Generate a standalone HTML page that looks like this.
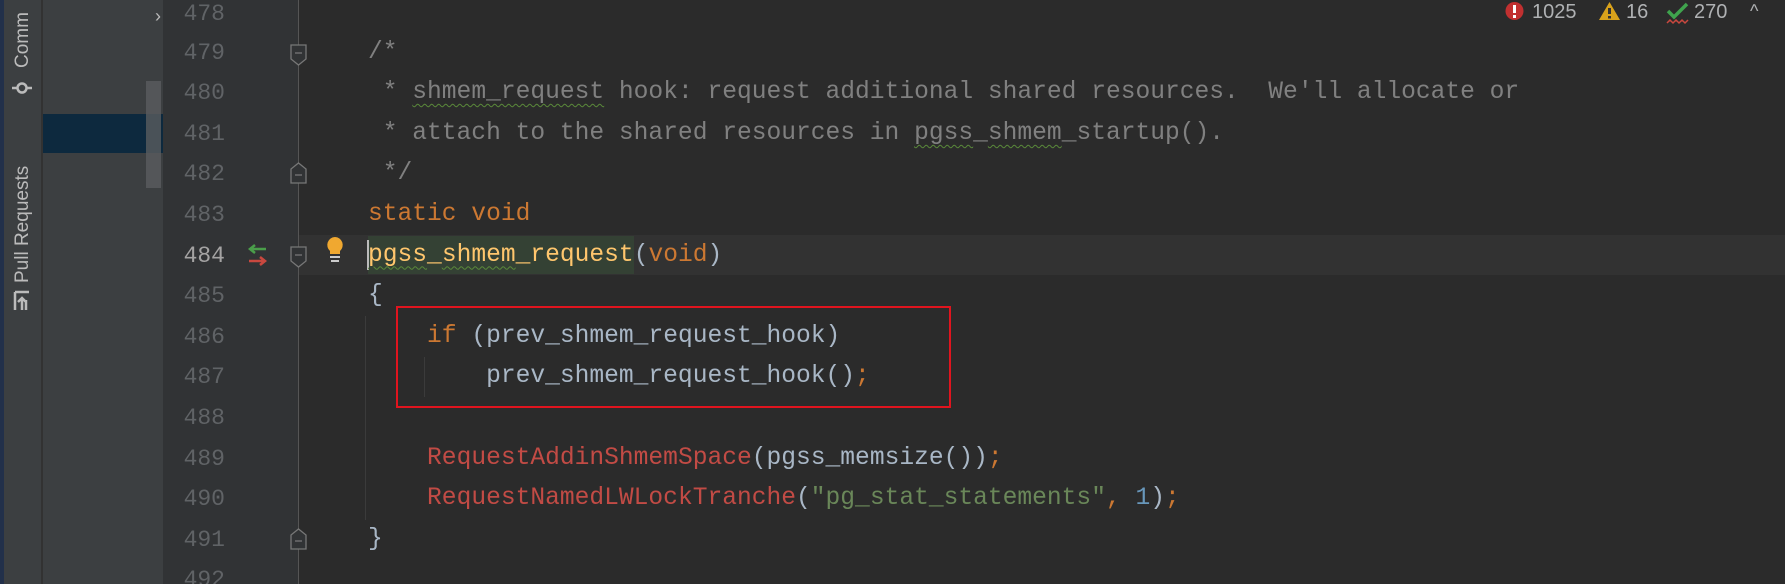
<!DOCTYPE html>
<html><head><style>
html,body{margin:0;width:1785px;height:584px;overflow:hidden}
body{background:#2b2b2b;position:relative;font-family:"Liberation Mono",monospace}
.a{position:absolute}
.ln{position:absolute;right:1560px;width:60px;text-align:right;color:#606366;font-size:23px;line-height:40.6px;height:40.6px}
.c{position:absolute;left:368px;white-space:pre;font-size:24.6px;line-height:40.6px;height:40.6px;color:#a9b7c6}
.cm{color:#808080}.kw{color:#cc7832}.fn{color:#ffc66d}.rf{color:#c24b45}.st{color:#6a8759}.nu{color:#6897bb}
.wv{text-decoration:underline wavy #5a8a3a;text-decoration-thickness:1px;text-underline-offset:5px}
.vt{position:absolute;transform:rotate(-90deg);transform-origin:left top;font-family:"Liberation Sans",sans-serif;color:#bbbbbb;font-size:19px;white-space:nowrap}
</style></head><body>
<div class="a" style="left:0;top:0;width:4px;height:584px;background:#22304a"></div>
<div class="a" style="left:4px;top:0;width:37px;height:584px;background:#3c3f41"></div>
<div class="a" style="left:41px;top:0;width:2px;height:584px;background:#323232"></div>
<div class="vt" style="left:12px;top:68px">Comm</div>
<svg class="a" style="left:12px;top:78px" width="20" height="20"><circle cx="10" cy="10" r="4.5" fill="none" stroke="#bbb" stroke-width="2.5"/><line x1="0" y1="10" x2="5" y2="10" stroke="#bbb" stroke-width="2.5"/><line x1="15" y1="10" x2="20" y2="10" stroke="#bbb" stroke-width="2.5"/></svg>
<div class="vt" style="left:12px;top:283px">Pull Requests</div>
<svg class="a" style="left:13px;top:290px" width="18" height="22"><path d="M2 2h14M2 2v18M9 20V8M5 12l4-4 4 4M13 10v10" fill="none" stroke="#bbb" stroke-width="2.5"/></svg>
<div class="a" style="left:43px;top:0;width:120px;height:584px;background:#3c3f41"></div>
<div class="a" style="left:43px;top:114px;width:120px;height:39px;background:#0d293e"></div>
<div class="a" style="left:146px;top:81px;width:15px;height:107px;background:#5a5d5f;opacity:.8"></div>
<div class="a" style="left:155px;top:6px;color:#bbb;font-family:'Liberation Sans';font-size:18px">›</div>
<div class="a" style="left:163px;top:0;width:135px;height:584px;background:#313335"></div>
<div class="a" style="left:298px;top:0;width:1px;height:584px;background:#555"></div>
<div class="a" style="left:299px;top:235px;width:1486px;height:40px;background:#323232"></div>
<div class="ln" style="top:-6px">478</div>
<div class="ln" style="top:32.6px">479</div>
<div class="ln" style="top:73.2px">480</div>
<div class="ln" style="top:113.8px">481</div>
<div class="ln" style="top:154.4px">482</div>
<div class="ln" style="top:195px">483</div>
<div class="ln" style="top:235.6px;color:#a4a3a3">484</div>
<div class="ln" style="top:276.2px">485</div>
<div class="ln" style="top:316.8px">486</div>
<div class="ln" style="top:357.4px">487</div>
<div class="ln" style="top:398px">488</div>
<div class="ln" style="top:438.6px">489</div>
<div class="ln" style="top:479.2px">490</div>
<div class="ln" style="top:519.8px">491</div>
<div class="ln" style="top:560.4px">492</div>
<svg class="a" style="left:290px;top:44px" width="17" height="22"><path d="M1 1h15v14l-7.5 6-7.5-6z" fill="#313335" stroke="#777" stroke-width="1.3"/><line x1="5" y1="9" x2="12" y2="9" stroke="#777" stroke-width="1.3"/></svg>
<svg class="a" style="left:290px;top:162px" width="17" height="22"><path d="M1 21h15V7L8.5 1 1 7z" fill="#313335" stroke="#777" stroke-width="1.3"/><line x1="5" y1="13" x2="12" y2="13" stroke="#777" stroke-width="1.3"/></svg>
<svg class="a" style="left:290px;top:246px" width="17" height="22"><path d="M1 1h15v14l-7.5 6-7.5-6z" fill="#313335" stroke="#777" stroke-width="1.3"/><line x1="5" y1="9" x2="12" y2="9" stroke="#777" stroke-width="1.3"/></svg>
<svg class="a" style="left:290px;top:528px" width="17" height="22"><path d="M1 21h15V7L8.5 1 1 7z" fill="#313335" stroke="#777" stroke-width="1.3"/><line x1="5" y1="13" x2="12" y2="13" stroke="#777" stroke-width="1.3"/></svg>
<svg class="a" style="left:246px;top:244px" width="22" height="24"><path d="M20 5H5M9 1L4 5l5 4" fill="none" stroke="#4a9e4a" stroke-width="2.5"/><path d="M3 17h15M14 13l5 4-5 4" fill="none" stroke="#c9483f" stroke-width="2.5"/></svg>
<svg class="a" style="left:324px;top:236px" width="22" height="28"><path d="M11 1a8 8 0 0 0-5 14v3h10v-3a8 8 0 0 0-5-14z" fill="#f0a830"/><rect x="6" y="20" width="10" height="2" fill="#ccc"/><rect x="7" y="24" width="8" height="2" fill="#ccc"/></svg>
<div class="a" style="left:365px;top:316px;width:1px;height:204px;background:#3b3b3b"></div>
<div class="a" style="left:424px;top:357px;width:1px;height:40px;background:#3b3b3b"></div>
<div class="c cm" style="top:32.6px">/*</div>
<div class="c cm" style="top:73.2px"> * <span class="wv">shmem_request</span> hook: request additional shared resources.  We'll allocate or</div>
<div class="c cm" style="top:113.8px"> * attach to the shared resources in <span class="wv">pgss</span>_<span class="wv">shmem</span>_startup().</div>
<div class="c cm" style="top:154.4px"> */</div>
<div class="c kw" style="top:195px">static void</div>
<div class="a" style="left:368px;top:236px;width:266px;height:38px;background:#344134"></div>
<div class="a" style="left:367px;top:240px;width:2px;height:30px;background:#bbb"></div>
<div class="c" style="top:235.6px"><span class="fn"><span class="wv">pgss</span>_<span class="wv">shmem</span>_request</span>(<span class="kw">void</span>)</div>
<div class="c" style="top:276.2px">{</div>
<div class="c" style="top:316.8px">    <span class="kw">if</span> (prev_shmem_request_hook)</div>
<div class="c" style="top:357.4px">        prev_shmem_request_hook()<span class="kw">;</span></div>
<div class="c" style="top:438.6px">    <span class="rf">RequestAddinShmemSpace</span>(pgss_memsize())<span class="kw">;</span></div>
<div class="c" style="top:479.2px">    <span class="rf">RequestNamedLWLockTranche</span>(<span class="st">"pg_stat_statements"</span><span class="kw">,</span> <span class="nu">1</span>)<span class="kw">;</span></div>
<div class="c" style="top:519.8px">}</div>
<div class="a" style="left:396px;top:306px;width:551px;height:98px;border:2px solid #e0141e"></div>
<div class="a" style="left:1505px;top:1px;width:270px;font-family:'Liberation Sans',sans-serif;font-size:20px;color:#afb1b3;height:22px">
<svg class="a" style="left:0;top:0" width="19" height="20"><circle cx="9.5" cy="10" r="9" fill="#c13030"/><rect x="8" y="4" width="3" height="8" fill="#fff"/><rect x="8" y="14" width="3" height="3" fill="#fff"/></svg>
<span class="a" style="left:27px;top:0">1025</span>
<svg class="a" style="left:93px;top:0" width="23" height="20"><path d="M11.5 1L22 19H1z" fill="#d9a21b"/><rect x="10" y="7" width="3" height="6" fill="#333"/><rect x="10" y="15" width="3" height="2.5" fill="#333"/></svg>
<span class="a" style="left:121px;top:0">16</span>
<svg class="a" style="left:161px;top:0" width="23" height="24"><path d="M2 10l6 6L21 3" fill="none" stroke="#3fa34d" stroke-width="3.5"/><path d="M1 22l3-3 3 3 3-3 3 3 3-3 3 3 3-3" fill="none" stroke="#c9483f" stroke-width="1.5"/></svg>
<span class="a" style="left:189px;top:0">270</span>
<span class="a" style="left:245px;top:0;font-size:18px">^</span>
</div>
</body></html>
